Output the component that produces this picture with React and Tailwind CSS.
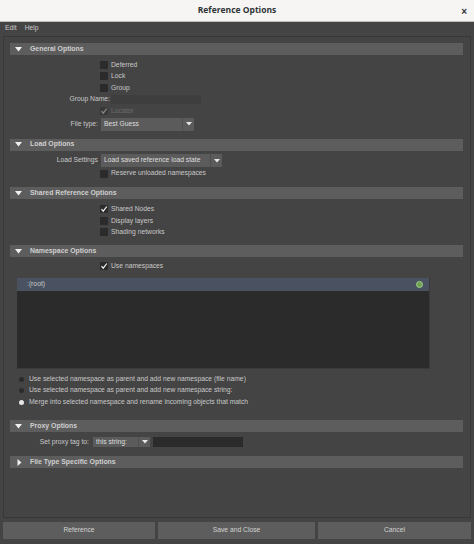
import React from "react";

const font = { fontFamily: '"Liberation Sans", Arial, sans-serif' };

function Tri({ open = true }) {
  return open ? (
    <svg width="7" height="5" viewBox="0 0 7 5" className="shrink-0">
      <polygon points="0,0 7,0 3.5,4.5" fill="#f0f0f0" />
    </svg>
  ) : (
    <svg width="5" height="7" viewBox="0 0 5 7" className="shrink-0">
      <polygon points="0.5,0 4.5,3.5 0.5,7" fill="#f0f0f0" />
    </svg>
  );
}

function Header({ title, open = true }) {
  return (
    <div className="h-[12px] w-[453px] bg-[#5d5d5d] flex items-center">
      <div className={open ? "w-[20px] pl-[5px] flex items-center" : "w-[20px] pl-[7px] flex items-center"}>
        <Tri open={open} />
      </div>
      <span className="font-bold text-[6.9px] text-[#cfcfcf]">{title}</span>
    </div>
  );
}

function Check({ checked, disabled }) {
  return (
    <div className={"w-[8px] h-[8px] flex items-center justify-center " + (disabled ? "bg-[#393939]" : "bg-[#2b2b2b]")}>
      {checked && (
        <svg width="8" height="8" viewBox="0 0 8 8">
          <polyline points="1.5,4.2 3.2,6.2 6.8,1.5" fill="none" stroke={disabled ? "#8a8a8a" : "#f2f2f2"} strokeWidth="1.2" />
        </svg>
      )}
    </div>
  );
}

function CheckRow({ label, checked, disabled, h = "h-[11.5px]" }) {
  return (
    <div className={"flex items-center " + h}>
      <div className="w-[90px]" />
      <Check checked={checked} disabled={disabled} />
      <span className={"ml-[3px] text-[6.75px] " + (disabled ? "text-[#6e6e6e]" : "text-[#c8c8c8]")}>{label}</span>
    </div>
  );
}

function Arrow() {
  return (
    <svg width="6" height="4" viewBox="0 0 6 4">
      <polygon points="0,0 6,0 3,3.5" fill="#e8e8e8" />
    </svg>
  );
}

function Dropdown({ text, w, h = "h-[13px]" }) {
  return (
    <div className={"flex items-stretch bg-[#5b5b5b] " + w + " " + h}>
      <div className="flex-1 flex items-center pl-[3px] text-[6.75px] text-[#dedede] border-r border-[#4e4e4e]">{text}</div>
      <div className="w-[11px] flex items-center justify-center">
        <Arrow />
      </div>
    </div>
  );
}

function Radio({ label, on }) {
  return (
    <div className="flex items-center h-[11px]">
      <div className="w-[12px] flex justify-center">
        <div className={"w-[5px] h-[5px] rounded-full " + (on ? "bg-[#e6e6e6]" : "bg-[#2b2b2b]")} />
      </div>
      <span className="ml-[2px] text-[6.75px] text-[#c8c8c8]">{label}</span>
    </div>
  );
}

export default function App() {
  return (
    <div className="w-[474px] h-[544px] bg-[#444444] flex flex-col overflow-hidden" style={font}>
      {/* Title bar */}
      <div className="h-[22px] bg-[#f6f5f4] border-b border-[#bdbdbd] flex items-center relative shrink-0">
        <div className="flex-1 text-center text-[8.5px] font-bold text-[#2e3436]" style={{ fontFamily: '"Open Sans", "Liberation Sans", sans-serif' }}>
          Reference Options
        </div>
        <div className="absolute right-[7px] top-[4px] text-[10px] font-bold text-[#2e3436]">×</div>
      </div>
      {/* Menu bar */}
      <div className="h-[13px] flex items-center gap-[8px] pl-[5px] text-[6.75px] text-[#c8c8c8] shrink-0">
        <span>Edit</span>
        <span>Help</span>
      </div>
      {/* Scroll area */}
      <div className="mx-[3px] mt-[1px] h-[482px] border border-[#383838] shrink-0 pl-[6px] pt-[6px]">
        {/* General */}
        <Header title="General Options" />
        <div className="pt-[4px]">
          <CheckRow label="Deferred" h="h-[11.5px]" />
          <CheckRow label="Lock" h="h-[11.5px]" />
          <CheckRow label="Group" h="h-[11.5px]" />
          <div className="flex items-center h-[11.5px]">
            <div className="w-[101px] text-right text-[6.75px] text-[#c8c8c8] pr-[1px]">Group Name:</div>
            <div className="w-[90px] h-[9px] bg-[#3e3e3e]" />
          </div>
          <CheckRow label="Locator" checked disabled h="h-[11.5px]" />
          <div className="flex items-center h-[14px] mt-[0.5px]">
            <div className="w-[91px] text-right text-[6.75px] text-[#c8c8c8] pr-[3px]">File type:</div>
            <Dropdown text="Best Guess" w="w-[93px]" />
          </div>
        </div>
        {/* Load */}
        <div className="mt-[7.5px]">
          <Header title="Load Options" />
        </div>
        <div className="pt-[3px]">
          <div className="flex items-center h-[14px]">
            <div className="w-[91px] text-right text-[6.75px] text-[#c8c8c8] pr-[3px]">Load Settings</div>
            <Dropdown text="Load saved reference load state" w="w-[121px]" />
          </div>
          <CheckRow label="Reserve unloaded namespaces" h="h-[12px]" />
        </div>
        {/* Shared */}
        <div className="mt-[7.5px]">
          <Header title="Shared Reference Options" />
        </div>
        <div className="pt-[4px]">
          <CheckRow label="Shared Nodes" checked h="h-[12px]" />
          <CheckRow label="Display layers" h="h-[11.5px]" />
          <CheckRow label="Shading networks" h="h-[11.5px]" />
        </div>
        {/* Namespace */}
        <div className="mt-[7px]">
          <Header title="Namespace Options" />
        </div>
        <div className="pt-[3px]">
          <CheckRow label="Use namespaces" checked h="h-[12px]" />
          <div className="ml-[7px] mt-[6px] w-[413px] h-[91px] bg-[#2b2b2b] border-r border-b border-[#3a3a3a]">
            <div className="h-[13px] bg-[#4a5262] flex items-center justify-between pl-[10px] pr-[6px]">
              <span className="text-[6.75px] text-[#c8c8c8]">:(root)</span>
              <div className="w-[7px] h-[7px] rounded-full bg-[#6fa054] border border-[#9fcf84]" />
            </div>
          </div>
          <div className="mt-[5px] ml-[5px]">
            <Radio label="Use selected namespace as parent and add new namespace (file name)" />
            <Radio label="Use selected namespace as parent and add new namespace string:" />
            <div className="mt-[1px]">
              <Radio label="Merge into selected namespace and rename incoming objects that match" on />
            </div>
          </div>
        </div>
        {/* Proxy */}
        <div className="mt-[12px]">
          <Header title="Proxy Options" />
        </div>
        <div className="pt-[5px] flex items-center h-[15px]">
          <div className="w-[83px] text-right text-[6.75px] text-[#c8c8c8] pr-[4px]">Set proxy tag to:</div>
          <Dropdown text="this string:" w="w-[57px]" h="h-[10px]" />
          <div className="ml-[3px] w-[90px] h-[10px] bg-[#2b2b2b]" />
        </div>
        <div className="mt-[9px]">
          <Header title="File Type Specific Options" open={false} />
        </div>
      </div>
      {/* Buttons */}
      <div className="flex gap-[3px] px-[3px] mt-[4px] h-[17px] shrink-0">
        <div className="w-[152px] bg-[#5d5d5d] flex items-center justify-center text-[6.75px] text-[#d2d2d2]">Reference</div>
        <div className="w-[157px] bg-[#5d5d5d] flex items-center justify-center text-[6.75px] text-[#d2d2d2]">Save and Close</div>
        <div className="flex-1 bg-[#5d5d5d] flex items-center justify-center text-[6.75px] text-[#d2d2d2]">Cancel</div>
      </div>
    </div>
  );
}
